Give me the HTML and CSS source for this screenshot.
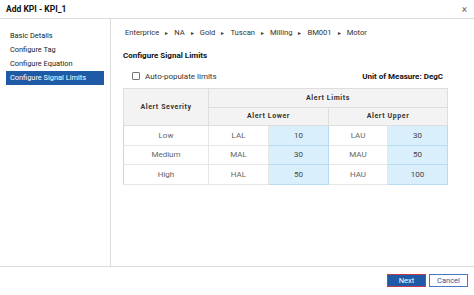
FILE: index.html
```html
<!DOCTYPE html>
<html lang="en">
<head>
  <meta charset="UTF-8" />
  <title>Add KPI - KPI_1</title>
  <link rel="stylesheet" href="styles.css">
</head>
<body>
  <div class="dialog">
    <div class="header">
      <span class="title">Add KPI - KPI_1</span>
      <span class="close">&times;</span>
    </div>

    <div class="main">
      <ul class="steps">
        <li>Basic Details</li>
        <li>Configure Tag</li>
        <li>Configure Equation</li>
        <li class="active">Configure Signal Limits</li>
      </ul>

      <div class="content">
        <div class="crumbs">
          <span>Enterprice</span><i>&#9656;</i>
          <span>NA</span><i>&#9656;</i>
          <span>Gold</span><i>&#9656;</i>
          <span>Tuscan</span><i>&#9656;</i>
          <span>Milling</span><i>&#9656;</i>
          <span>BM001</span><i>&#9656;</i>
          <span>Motor</span>
        </div>

        <h2>Configure Signal Limits</h2>

        <div class="options">
          <label class="check"><span class="box"></span>Auto-populate limits</label>
          <span class="unit">Unit of Measure: DegC</span>
        </div>

        <table class="limits">
          <colgroup>
            <col style="width:85px"><col style="width:60px"><col style="width:60px"><col style="width:59px"><col style="width:60px">
          </colgroup>
          <thead>
            <tr>
              <th rowspan="2">Alert Severity</th>
              <th colspan="4">Alert Limits</th>
            </tr>
            <tr>
              <th colspan="2">Alert Lower</th>
              <th colspan="2">Alert Upper</th>
            </tr>
          </thead>
          <tbody>
            <tr><td>Low</td><td>LAL</td><td class="val">10</td><td>LAU</td><td class="val">30</td></tr>
            <tr><td>Medium</td><td>MAL</td><td class="val">30</td><td>MAU</td><td class="val">50</td></tr>
            <tr><td>High</td><td>HAL</td><td class="val">50</td><td>HAU</td><td class="val">100</td></tr>
          </tbody>
        </table>
      </div>
    </div>

    <div class="footer">
      <button class="btn primary">Next</button>
      <button class="btn">Cancel</button>
    </div>
  </div>
</body>
</html>
```

FILE: styles.css
```css
* { box-sizing: border-box; margin: 0; padding: 0; }
body {
  background: #fff;
  color: #222;
  font-family: Roboto, "Liberation Sans", sans-serif;
  font-size: 8px;
}
.dialog {
  width: 474px;
  height: 295px;
  display: flex;
  flex-direction: column;
}
.header {
  height: 19px;
  border-bottom: 1px solid #dcdcdc;
  display: flex;
  align-items: center;
  justify-content: space-between;
  padding: 0 7px 0 6px;
}
.title {
  font-size: 8.5px;
  font-weight: bold;
  color: #111;
}
.close {
  font-size: 10px;
  color: #666;
}
.main {
  height: 248px;
  display: flex;
  border-bottom: 1px solid #dcdcdc;
}
.steps {
  width: 111px;
  border-right: 1px solid #dcdcdc;
  list-style: none;
  padding: 10px 6px 0 6px;
  font-size: 7.4px;
}
.steps li {
  height: 14px;
  line-height: 14px;
  padding-left: 4px;
  color: #222;
}
.steps li.active {
  background: #1f5aa6;
  color: #fff;
}
.content {
  flex: 1;
  padding: 6px 0 0 12px;
}
.crumbs {
  height: 14px;
  display: flex;
  align-items: center;
  gap: 6px;
  padding-left: 2px;
  font-size: 7.6px;
  color: #333;
}
.crumbs i {
  font-style: normal;
  font-size: 6px;
  color: #333;
}
h2 {
  margin-top: 12px;
  font-size: 8px;
  font-weight: bold;
  color: #111;
}
.options {
  margin-top: 10px;
  width: 324px;
  display: flex;
  justify-content: space-between;
  align-items: center;
  padding-left: 9px;
  height: 12px;
}
.check {
  display: flex;
  align-items: center;
  gap: 5px;
  color: #333;
}
.box {
  width: 8px;
  height: 8px;
  border: 1px solid #777;
  border-radius: 1px;
}
.unit {
  font-weight: bold;
  color: #111;
  padding-right: 4px;
}
.limits {
  margin-top: 6px;
  width: 324px;
  border-collapse: collapse;
  table-layout: fixed;
  border: 1px solid #d4d4d4;
}
.limits th {
  background: #f3f3f3;
  font-size: 7px;
  font-weight: bold;
  letter-spacing: 0.6px;
  color: #333;
  height: 18.5px;
  border: 1px solid #dedede;
}
.limits td {
  height: 19.5px;
  text-align: center;
  color: #666;
  border-bottom: 1px solid #e6e6e6;
  border-right: 1px solid #e6e6e6;
}
.limits td.val {
  background: #d9effc;
  border: 1px solid #b9dbf0;
  color: #444;
}
.footer {
  flex: 1;
  display: flex;
  justify-content: flex-end;
  align-items: flex-start;
  gap: 3px;
  padding: 7px 6px 0 0;
}
.btn {
  width: 39px;
  height: 13px;
  font-family: inherit;
  font-size: 7.5px;
  background: #fff;
  color: #2a5aa0;
  border: 1px solid #4b79bd;
}
.btn.primary {
  background: #1f5aa6;
  color: #fff;
  border: 1px solid #c0394b;
}
```
